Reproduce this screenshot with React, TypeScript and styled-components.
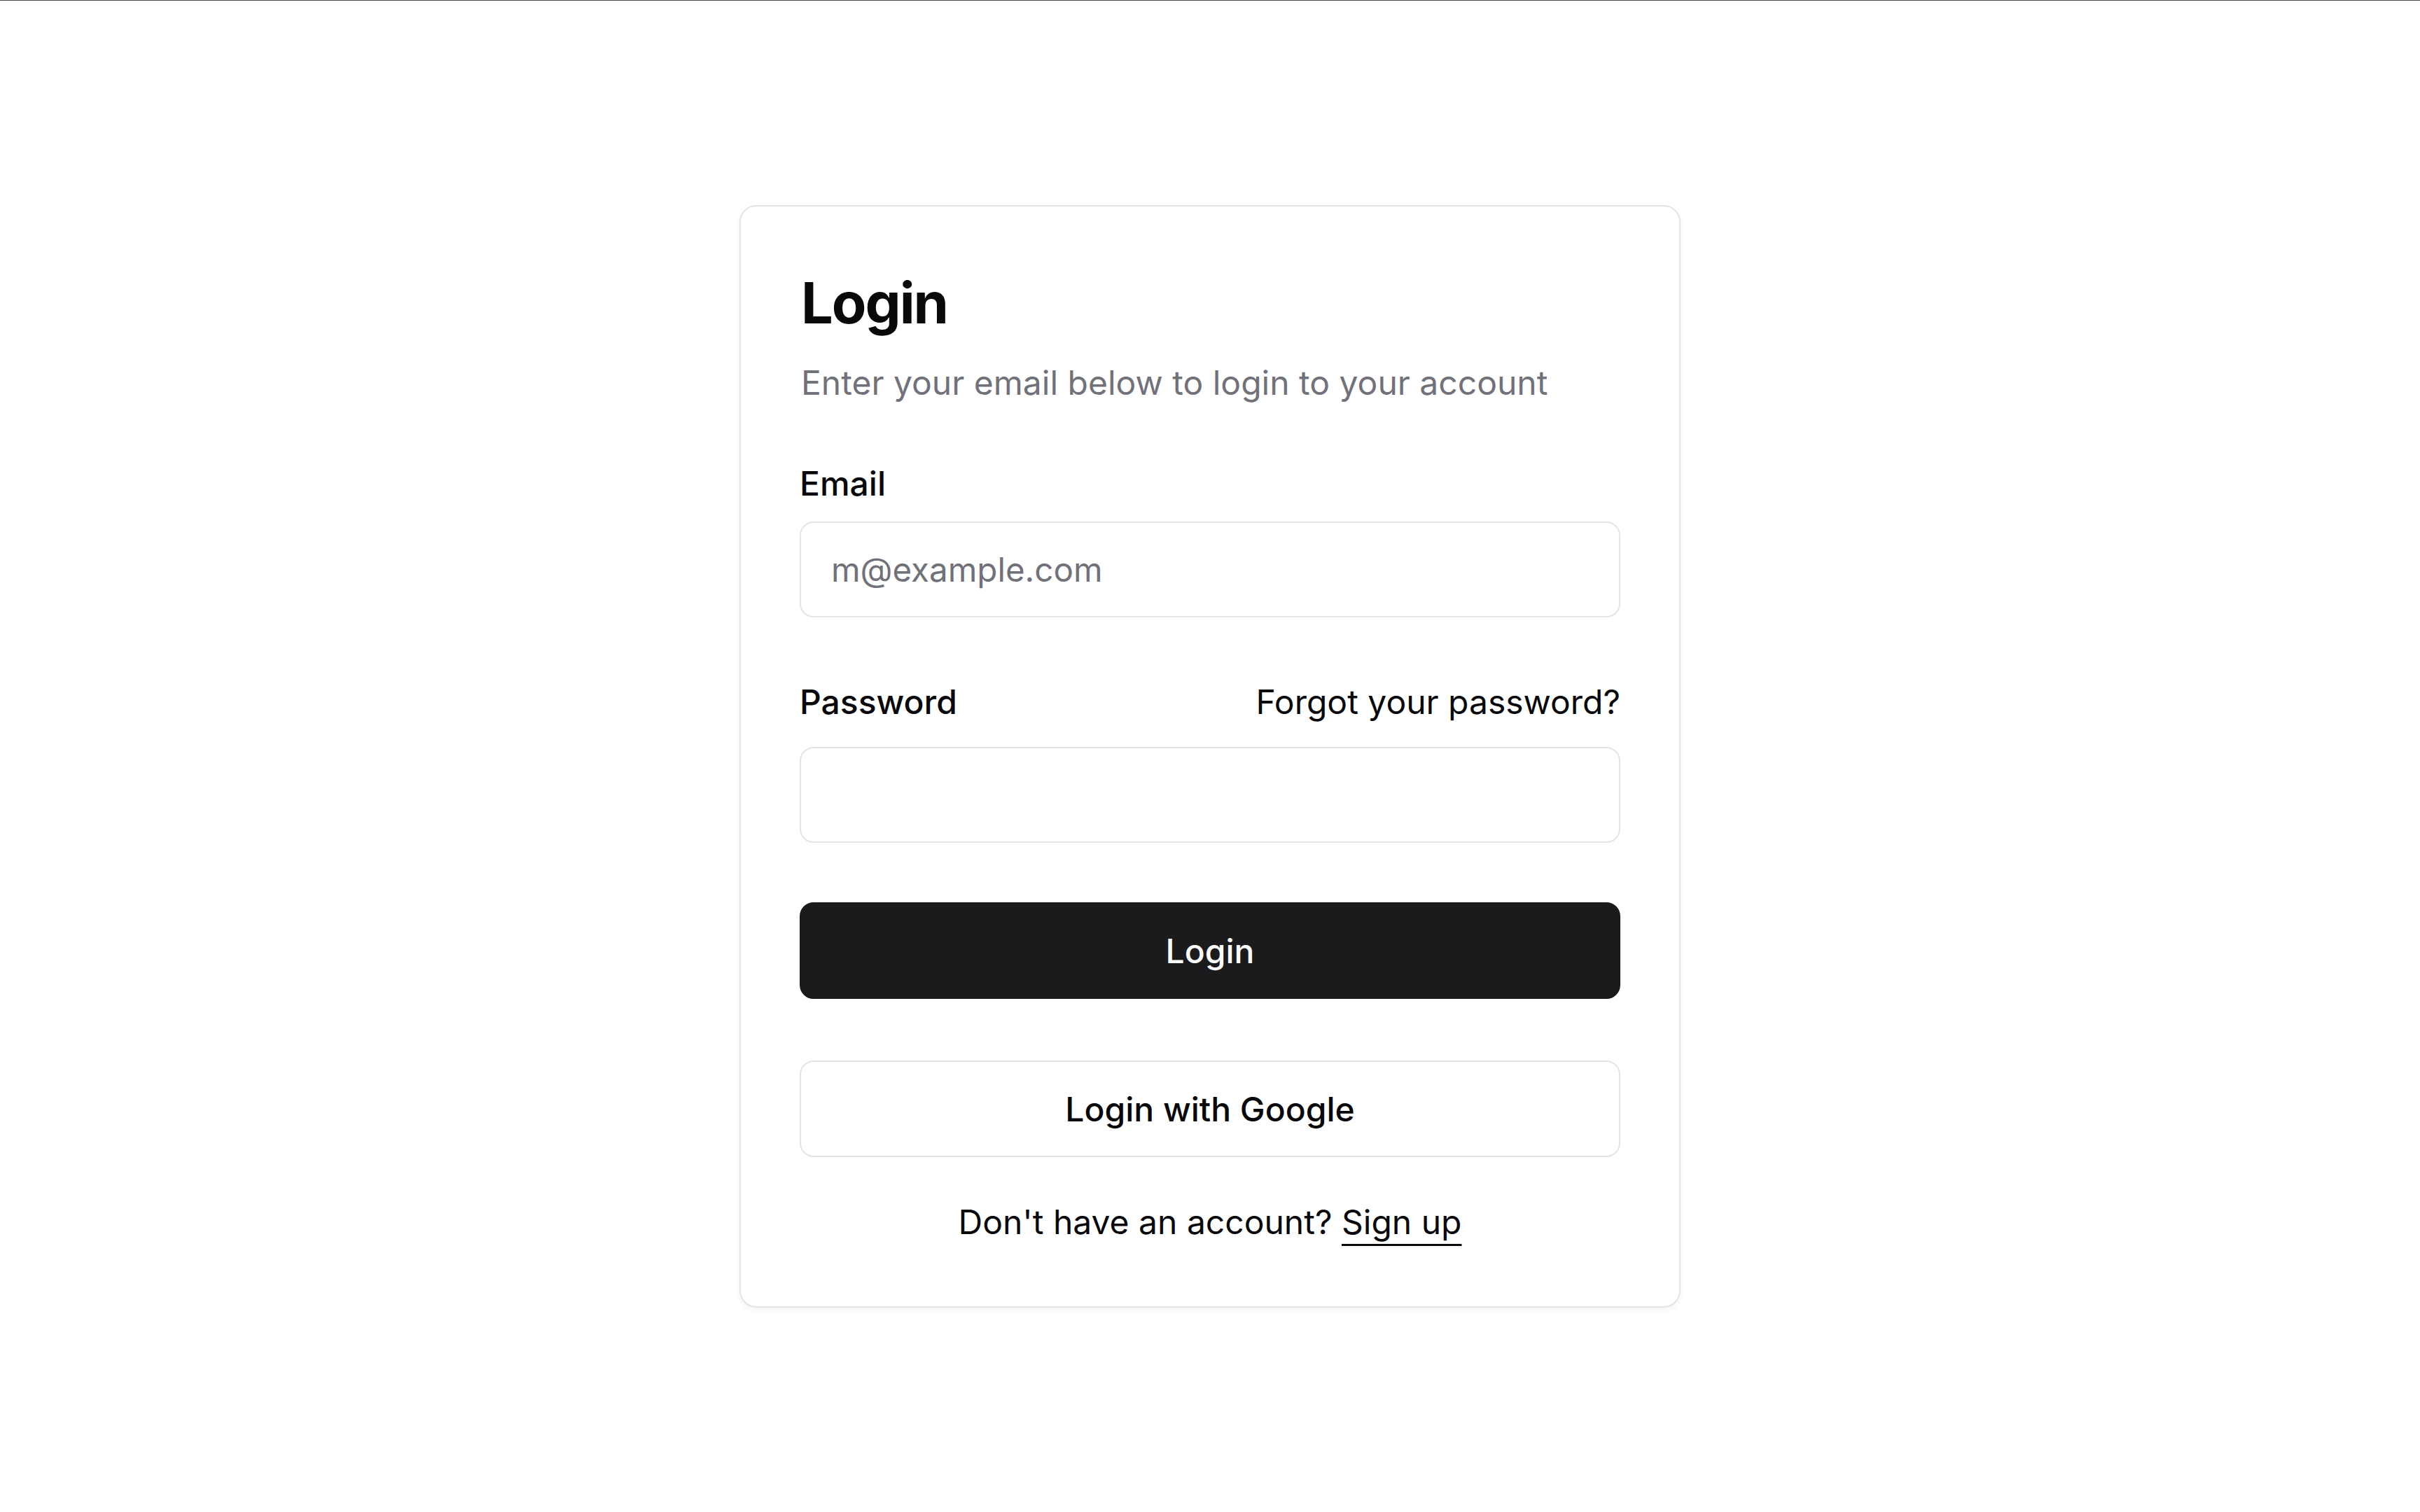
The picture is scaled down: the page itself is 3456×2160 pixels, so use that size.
import styled, { createGlobalStyle } from 'styled-components';

const GlobalStyle = createGlobalStyle`
  * {
    box-sizing: border-box;
  }

  html,
  body {
    margin: 0;
    padding: 0;
    background: #ffffff;
  }

  body {
    font-family: Inter, 'Noto Sans', 'Liberation Sans', sans-serif;
    color: #09090b;
    -webkit-font-smoothing: antialiased;
  }
`;

export default function App() {
  return (
    <>
      <GlobalStyle />
      <Page>
        <Card>
          <Header>
            <Title>Login</Title>
            <Description>Enter your email below to login to your account</Description>
          </Header>

          <Form onSubmit={(e) => e.preventDefault()}>
            <Field gap={30}>
              <Label htmlFor='email'>Email</Label>
              <Input id='email' type='email' placeholder='m@example.com' />
            </Field>

            <Field gap={40}>
              <LabelRow>
                <Label htmlFor='password'>Password</Label>
                <TextLink href='#'>Forgot your password?</TextLink>
              </LabelRow>
              <Input id='password' type='password' />
            </Field>

            <Button type='submit' variant='primary'>
              Login
            </Button>
            <Button type='button' variant='outline'>
              Login with Google
            </Button>
          </Form>

          <Footer>
            Don't have an account? <SignUp href='#'>Sign up</SignUp>
          </Footer>
        </Card>
      </Page>
    </>
  );
}

const Page = styled.main`
  height: 100vh;
  border-top: 1px solid #4a4a4a;
  display: flex;
  align-items: center;
  justify-content: center;
`;

const Card = styled.section`
  width: 1344px;
  display: flex;
  flex-direction: column;
  padding: 98px 84px 84px;
  background: #ffffff;
  border: 2px solid #e4e4e7;
  border-radius: 24px;
  box-shadow: 0 3px 7px rgba(0, 0, 0, 0.05);
`;

const Header = styled.div`
  display: flex;
  flex-direction: column;
  gap: 38px;
  padding-left: 2px;
`;

const Title = styled.h1`
  margin: 0;
  font-size: 81px;
  line-height: 1;
  font-weight: 700;
  letter-spacing: -2px;
`;

const Description = styled.p`
  margin: 0;
  font-size: 48px;
  line-height: 1.47;
  color: #71717a;
`;

const Form = styled.form`
  display: flex;
  flex-direction: column;
  margin-top: 84px;
`;

const Field = styled.div<{ gap: number }>`
  display: flex;
  flex-direction: column;
  gap: ${({ gap }) => gap}px;

  & + & {
    margin-top: 97px;
  }
`;

const LabelRow = styled.div`
  display: flex;
  align-items: baseline;
  justify-content: space-between;
`;

const Label = styled.label`
  font-size: 48px;
  line-height: 1;
  font-weight: 500;
`;

const TextLink = styled.a`
  font-size: 48px;
  line-height: 1;
  color: #09090b;
  text-decoration: none;
`;

const Input = styled.input`
  width: 100%;
  height: 137px;
  padding: 0 43px;
  font-family: inherit;
  font-size: 47.5px;
  color: #09090b;
  background: #ffffff;
  border: 2px solid #e4e4e7;
  border-radius: 20px;
  outline: none;

  &::placeholder {
    color: #71717a;
  }
`;

const Button = styled.button<{ variant: 'primary' | 'outline' }>`
  width: 100%;
  height: 138px;
  font-family: inherit;
  font-size: 48px;
  font-weight: 500;
  border-radius: 20px;
  cursor: pointer;
  color: ${({ variant }) => (variant === 'primary' ? '#fafafa' : '#09090b')};
  background: ${({ variant }) => (variant === 'primary' ? '#1b1b1d' : '#ffffff')};
  border: 2px solid ${({ variant }) => (variant === 'primary' ? '#1b1b1d' : '#e4e4e7')};
  margin-top: ${({ variant }) => (variant === 'primary' ? 85 : 88)}px;
`;

const Footer = styled.p`
  margin: 58px 0 0;
  text-align: center;
  font-size: 48px;
  line-height: 1.47;
`;

const SignUp = styled.a`
  color: #09090b;
  text-decoration: underline;
  text-decoration-thickness: 3px;
  text-underline-offset: 14px;
`;
